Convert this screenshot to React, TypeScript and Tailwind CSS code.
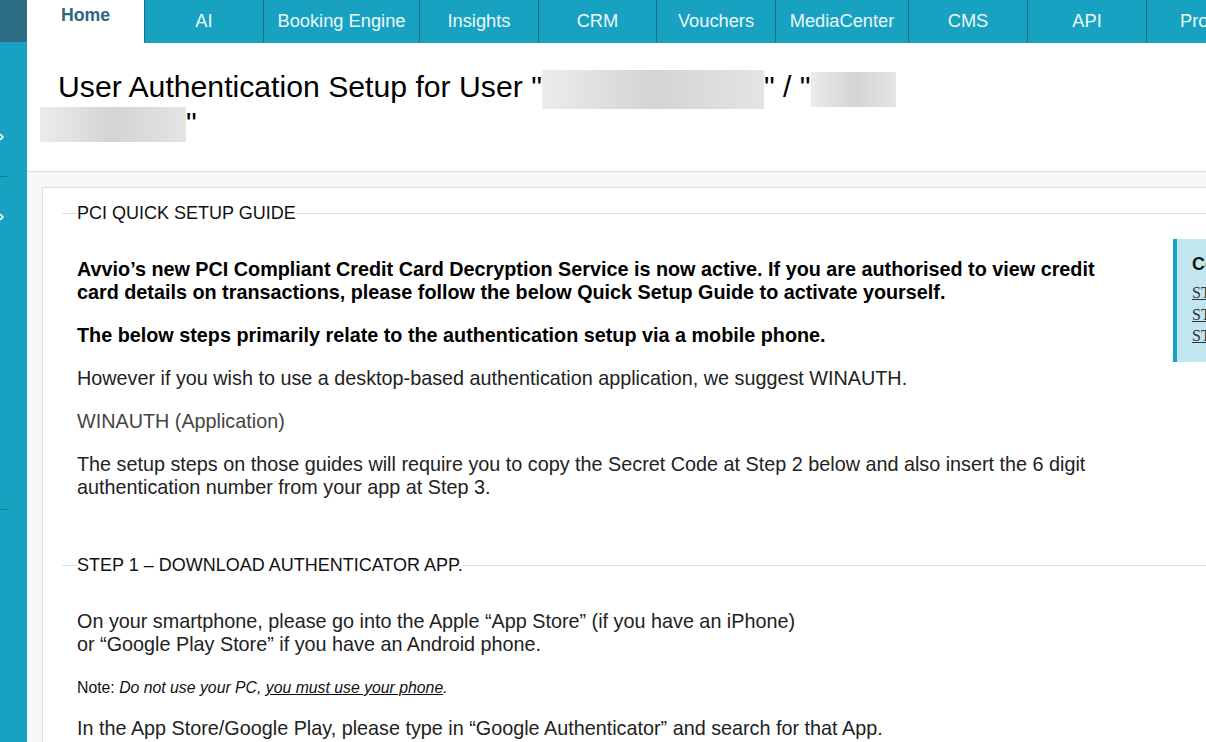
import React from "react";

const tabs = [
  { label: "AI", w: "w-[119px]" },
  { label: "Booking Engine", w: "w-[156px]" },
  { label: "Insights", w: "w-[119px]" },
  { label: "CRM", w: "w-[118px]" },
  { label: "Vouchers", w: "w-[119px]" },
  { label: "MediaCenter", w: "w-[133px]" },
  { label: "CMS", w: "w-[119px]" },
  { label: "API", w: "w-[119px]" },
  { label: "Profile", w: "w-[119px]" },
];

function Blur({ cls }: { cls: string }) {
  return (
    <span
      className={`inline-block align-middle bg-gradient-to-r from-[#ececec] via-[#d4d4d4] to-[#e4e4e4] ${cls}`}
    />
  );
}

function Legend({ text }: { text: string }) {
  return (
    <div className="flex items-center h-[22px] ml-[19px]">
      <div className="w-[15px] h-px bg-[#dcdcdc]" />
      <div className="text-[18px] text-[#111] whitespace-nowrap leading-[22px]">{text}</div>
      <div className="flex-1 h-px bg-[#dcdcdc]" />
    </div>
  );
}

function Chevron() {
  return (
    <svg width="6" height="8" viewBox="0 0 6 8" className="block">
      <path d="M0 1 L3 4 L0 7" stroke="#fff" strokeWidth="1.6" fill="none" />
    </svg>
  );
}

export default function App() {
  return (
    <div
      className="w-[1206px] h-[742px] overflow-hidden flex bg-[#f7f7f7]"
      style={{ fontFamily: '"Liberation Sans", Arial, sans-serif' }}
    >
      {/* Sidebar */}
      <div className="w-[27px] shrink-0 bg-[#17a2c2] flex flex-col">
        <div className="h-[42px] bg-[#2c6c84]" />
        <div className="h-[91px]" />
        <div className="h-[8px] flex items-center"><Chevron /></div>
        <div className="h-[35px]" />
        <div className="w-[7px] h-px bg-[#1b7690]" />
        <div className="h-[36px]" />
        <div className="h-[8px] flex items-center"><Chevron /></div>
        <div className="h-[288px]" />
        <div className="w-[7px] h-px bg-[#1b7690]" />
      </div>

      {/* Main */}
      <div className="flex-1 min-w-0 flex flex-col">
        {/* Tabs */}
        <div className="h-[43px] flex bg-[#17a2c2] shrink-0">
          <div className="w-[117px] shrink-0 bg-white flex justify-center pt-[5px]">
            <span className="text-[17.7px] font-bold text-[#2e6780] leading-[20px]">Home</span>
          </div>
          {tabs.map((t) => (
            <div
              key={t.label}
              className={`${t.w} shrink-0 border-l border-[#1d6f86] flex items-center justify-center text-[18.3px] text-[#eef6f9] whitespace-nowrap pb-[2px]`}
            >
              {t.label}
            </div>
          ))}
        </div>

        {/* Header */}
        <div className="bg-white border-b border-[#dddddd] h-[129px] pt-[27px] pl-[31px] shrink-0">
          <h1 className="text-[30.2px] leading-[34px] text-black whitespace-nowrap">
            User Authentication Setup for User "<Blur cls="w-[222px] h-[39px] -my-[3px]" />" / "
            <Blur cls="w-[85px] h-[35px] -my-[1px]" />
          </h1>
          <div className="text-[30.2px] leading-[34px] text-black whitespace-nowrap">
            <Blur cls="w-[146px] h-[35px] -ml-[18px] -my-[1px]" />"
          </div>
        </div>

        {/* Content */}
        <div className="flex-1 p-[15px]">
          <div className="w-[1300px] bg-white border border-[#dddddd] pt-[14px] pb-[40px]">
            <Legend text="PCI QUICK SETUP GUIDE" />
            <div className="flex items-start mt-[15px] pl-[34px]">
              <div className="w-[1048px] shrink-0 pt-[19px] text-[19.8px] leading-[23px] text-[#111]">
                <p className="font-bold mb-[20px] text-black">
                  Avvio’s new PCI Compliant Credit Card Decryption Service is now active. If you are authorised to view credit card details on transactions, please follow the below Quick Setup Guide to activate yourself.
                </p>
                <p className="font-bold mb-[20px] text-black">
                  The below steps primarily relate to the authentication setup via a mobile phone.
                </p>
                <p className="mb-[20px] text-[#222]">
                  However if you wish to use a desktop-based authentication application, we suggest WINAUTH.
                </p>
                <p className="mb-[20px] text-[#444]">WINAUTH (Application)</p>
                <p className="mb-[20px] text-[#222]">
                  The setup steps on those guides will require you to copy the Secret Code at Step 2 below and also insert the 6 digit authentication number from your app at Step 3.
                </p>
              </div>
              <div className="ml-[48px] w-[200px] shrink-0 bg-[#c2e6ef] border-l-[4px] border-[#17a2c2] pl-[15px] pt-[15px] pb-[15px]">
                <div className="text-[18px] font-bold text-[#111] leading-[20px] mb-[8px]">Contents</div>
                <div className="text-[16px] leading-[21.5px] text-[#333] underline whitespace-nowrap" style={{ fontFamily: '"Liberation Serif", serif' }}>
                  <div>STEP 1</div>
                  <div>STEP 2</div>
                  <div>STEP 3</div>
                </div>
              </div>
            </div>
            <div className="mt-[35px]">
              <Legend text="STEP 1 – DOWNLOAD AUTHENTICATOR APP." />
            </div>
            <div className="pl-[34px] mt-[34px] w-[1082px] text-[19.8px] leading-[23px] text-[#222]">
              <p>
                On your smartphone, please go into the Apple “App Store” (if you have an iPhone)
                <br />
                or “Google Play Store” if you have an Android phone.
              </p>
              <p className="text-[15.8px] leading-[18px] mt-[23px] text-[#111]">
                Note: <i>Do not use your PC, <span className="underline">you must use your phone</span>.</i>
              </p>
              <p className="mt-[20px]">
                In the App Store/Google Play, please type in “Google Authenticator” and search for that App.
              </p>
            </div>
          </div>
        </div>
      </div>
    </div>
  );
}
